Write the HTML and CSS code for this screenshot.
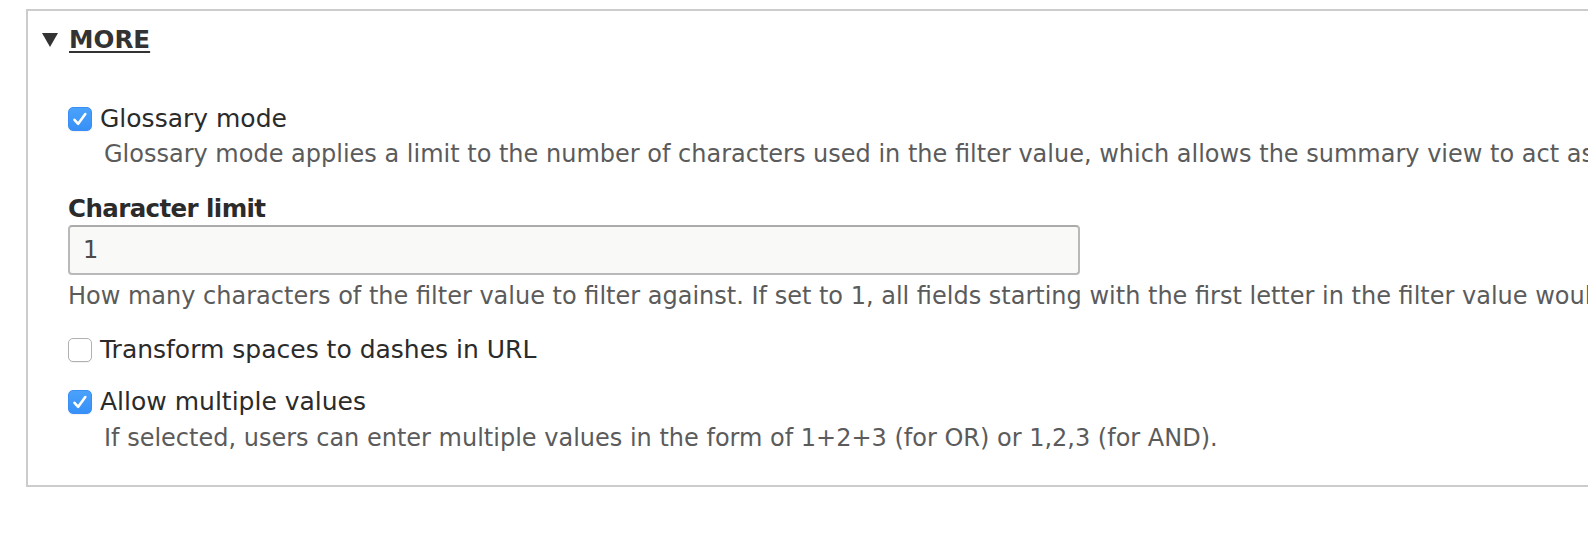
FILE: index.html
```html
<!DOCTYPE html>
<html lang="en">
<head>
<meta charset="utf-8">
<title>More</title>
<link rel="stylesheet" href="styles.css">
</head>
<body>
<div class="details">
  <div class="summary">
    <svg class="arrow" width="16" height="14" viewBox="0 0 16 14"><polygon points="0,0 16,0 8,14" fill="#333"/></svg>
    <span class="summary-text">MORE</span>
  </div>

  <div class="item item-glossary">
    <div class="check-row">
      <span class="box checked"><svg width="24" height="24" viewBox="0 0 24 24"><path d="M6.5 12.8 L10.2 16.8 L17.3 7" fill="none" stroke="#fff" stroke-width="2.6" stroke-linecap="round" stroke-linejoin="round"/></svg></span>
      <span class="label">Glossary mode</span>
    </div>
    <div class="desc indent">Glossary mode applies a limit to the number of characters used in the filter value, which allows the summary view to act as a glossary.</div>
  </div>

  <div class="item item-limit">
    <div class="field-label">Character limit</div>
    <div class="input">1</div>
    <div class="desc after-input">How many characters of the filter value to filter against. If set to 1, all fields starting with the first letter in the filter value would be matched.</div>
  </div>

  <div class="item item-transform">
    <div class="check-row">
      <span class="box"></span>
      <span class="label">Transform spaces to dashes in URL</span>
    </div>
  </div>

  <div class="item item-multiple">
    <div class="check-row">
      <span class="box checked"><svg width="24" height="24" viewBox="0 0 24 24"><path d="M6.5 12.8 L10.2 16.8 L17.3 7" fill="none" stroke="#fff" stroke-width="2.6" stroke-linecap="round" stroke-linejoin="round"/></svg></span>
      <span class="label">Allow multiple values</span>
    </div>
    <div class="desc indent desc-last">If selected, users can enter multiple values in the form of 1+2+3 (for OR) or 1,2,3 (for AND).</div>
  </div>
</div>
</body>
</html>
```

FILE: styles.css
```css
html, body {
  margin: 0;
  padding: 0;
  background: #fff;
  overflow: hidden;
}

body {
  font-family: "DejaVu Sans", "Liberation Sans", sans-serif;
  color: #333;
}

.details {
  margin: 9px 0 0 26px;
  width: 1700px;
  border: 2px solid #cccccc;
  padding: 0 0 32px 40px;
  box-sizing: border-box;
}

.summary {
  display: flex;
  align-items: flex-start;
  padding-top: 13.5px;
  margin-left: -26px;
  height: 30px;
}

.arrow {
  margin-top: 8.5px;
  margin-right: 11px;
  flex: none;
}

.summary-text {
  font-size: 24.6px;
  line-height: 30px;
  font-weight: bold;
  color: #333;
  text-decoration: underline;
  text-decoration-thickness: 2px;
  text-underline-offset: 3px;
}

.item-glossary { margin-top: 49px; }
.item-limit { margin-top: 25px; }
.item-transform { margin-top: 24px; }
.item-multiple { margin-top: 22px; }

.check-row {
  display: flex;
  align-items: flex-start;
  height: 30px;
}

.box {
  flex: none;
  width: 24px;
  height: 24px;
  margin-top: 3.5px;
  margin-right: 8px;
  border-radius: 5px;
  box-sizing: border-box;
  border: 1px solid #b0b0b0;
  background: #fff;
  box-shadow: 0 1px 1px rgba(0,0,0,0.06);
}

.box svg { display: block; margin: -1px; }

.box.checked {
  border: 1px solid #3a8ef5;
  background: linear-gradient(#4aa2fb, #3790f7);
}

.label {
  font-size: 25px;
  line-height: 30px;
  color: #2b2b2b;
  white-space: nowrap;
}

.desc {
  font-size: 24px;
  line-height: 30px;
  color: #5b5b5b;
  white-space: nowrap;
}

.indent {
  margin-top: 5.3px;
  padding-left: 36px;
}

.desc-last { margin-top: 6.3px; }

.field-label {
  font-size: 24.5px;
  line-height: 30px;
  font-weight: bold;
  color: #2b2b2b;
  letter-spacing: -0.6px;
  white-space: nowrap;
}

.input {
  margin-top: 1.5px;
  width: 1012px;
  height: 50px;
  box-sizing: border-box;
  border: 2px solid #b9b9b9;
  border-top-color: #ababab;
  border-radius: 4px;
  background: #f9f9f8;
  padding-left: 13px;
  font-size: 24px;
  line-height: 46px;
  color: #4a4a4a;
}

.after-input {
  margin-top: 5.7px;
}
```
